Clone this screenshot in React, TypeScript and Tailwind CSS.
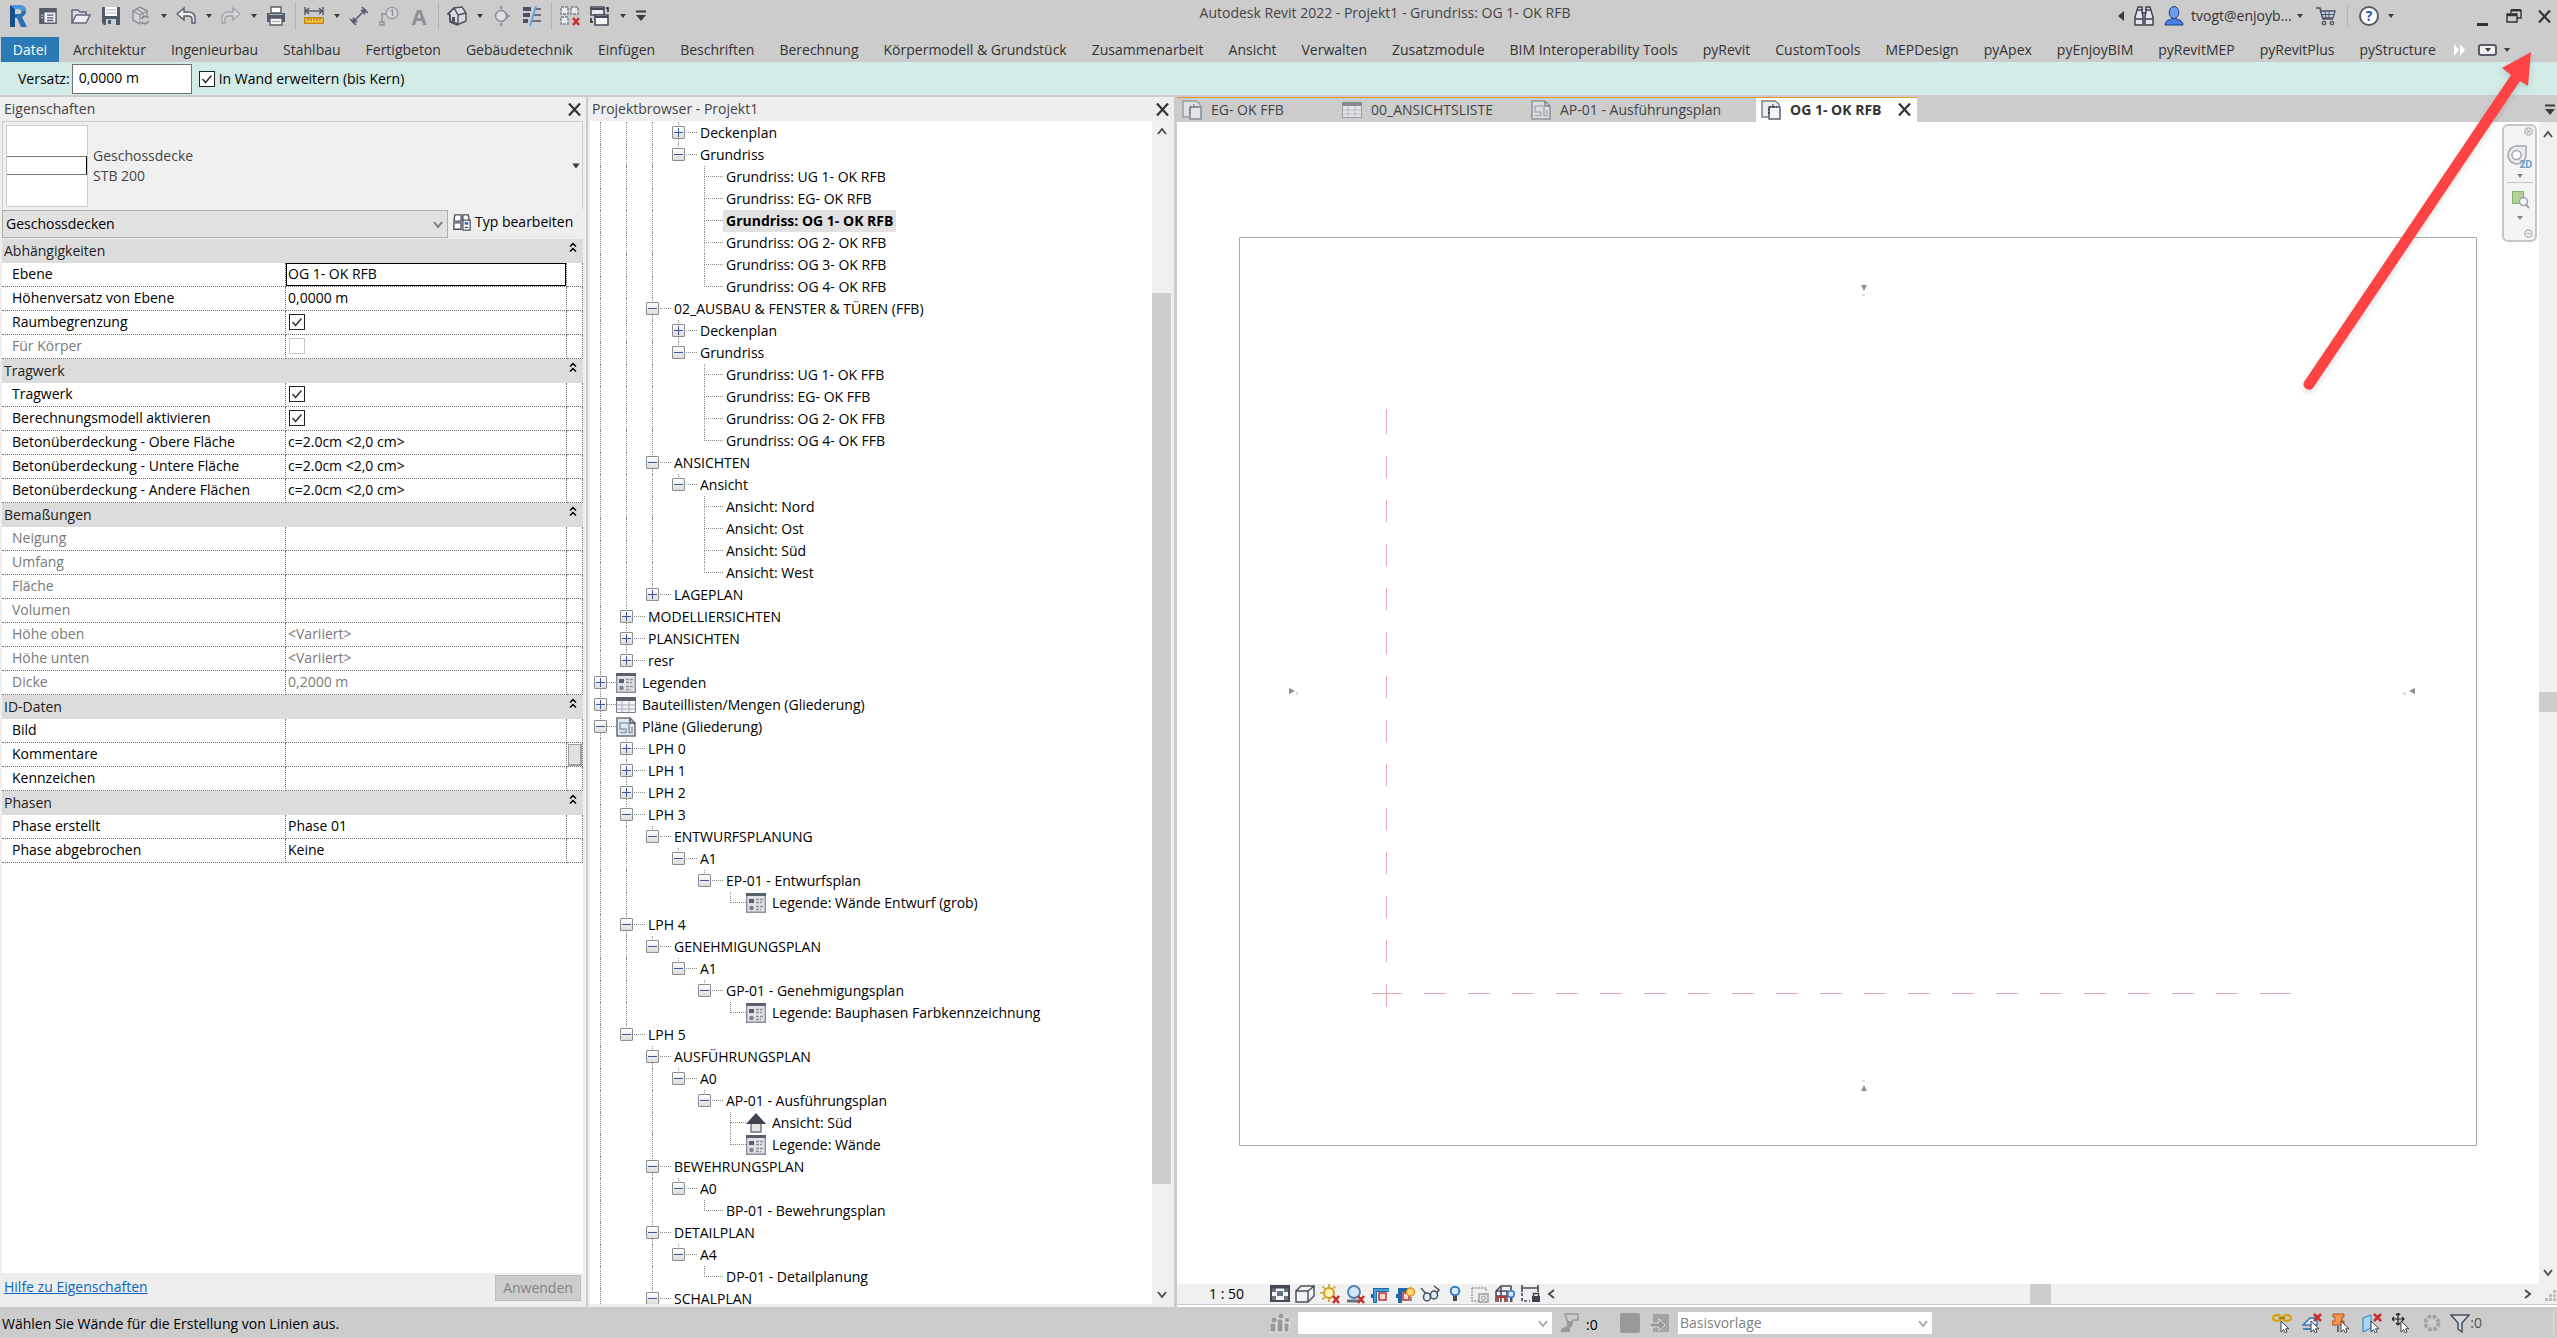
import type { ReactNode } from 'react'
import { clsx } from 'clsx'

type IconProps = { children: ReactNode; className?: string }

// All toolbar glyphs share a 20x20 grid
function Icon({ children, className = 'w-5 h-5' }: IconProps) {
  return (
    <svg viewBox="0 0 20 20" fill="none" className={clsx('shrink-0', className)} aria-hidden="true">
      {children}
    </svg>
  )
}

function Caret({ className = 'w-2 h-2' }: { className?: string }) {
  return (
    <svg viewBox="0 0 8 8" className={clsx('shrink-0', className)} aria-hidden="true">
      <path d="M1 2h6L4 6z" fill="#3c3c3c" />
    </svg>
  )
}

function Cross({ className = 'w-[13px] h-[13px]' }: { className?: string }) {
  return (
    <svg viewBox="0 0 13 13" className={clsx('shrink-0', className)} aria-hidden="true">
      <path d="M1 0.5l11 12M12 0.5L1 12.5" stroke="#333" strokeWidth="2.2" />
    </svg>
  )
}

function Chevron({ dir, className = 'w-3 h-3' }: { dir: 'up' | 'down' | 'left' | 'right'; className?: string }) {
  const d = {
    up: 'M2 8l4-5 4 5',
    down: 'M2 4l4 5 4-5',
    left: 'M8 2L3 6l5 4',
    right: 'M4 2l5 4-5 4'
  }[dir]
  return (
    <svg viewBox="0 0 12 12" className={clsx('shrink-0', className)} aria-hidden="true">
      <path d={d} fill="none" stroke="#505050" strokeWidth="2" />
    </svg>
  )
}

function Overflow() {
  return (
    <svg viewBox="0 0 12 12" className="w-3 h-3 shrink-0" aria-hidden="true">
      <path d="M1 1.5h10" stroke="#3c3c3c" strokeWidth="2" />
      <path d="M1 5h10l-5 6z" fill="#3c3c3c" />
    </svg>
  )
}

const cursor = <path d="M9 8v11l2.6-2.4 1.7 3.2 1.8-.9-1.6-3.1H17z" fill="#fff" stroke="#3a3f4a" />
const redX = <path d="M13 12l6 7M19 12l-6 7" stroke="#c9302c" strokeWidth="2.6" />

/* ---------- Document icons, also used in tree and view tabs ---------- */

const PlanIcon = () => (
  <Icon>
    <path d="M1 1h13l4 3v5H8v8H1z" fill="#e9ecf0" stroke="#7b818b" strokeWidth="1.5" />
    <path d="M8 7h11v12H8z" fill="#f3f5f8" stroke="#5d636e" strokeWidth="1.5" />
    <path d="M8 14V7h8" stroke="#333a47" strokeWidth="1.5" strokeDasharray="2 1.5" />
    <path d="M12 7V4" stroke="#333a47" />
  </Icon>
)

const ScheduleIcon = () => (
  <Icon>
    <path d="M.5 2.5h19v15H.5z" fill="#f2f4f6" stroke="#7b818b" />
    <path d="M0 2h20v4H0z" fill="#59606c" />
    <path d="M1 10h18M1 14h18M6 6v11M13 6v11" stroke="#a7adb6" />
  </Icon>
)

const SheetIcon = () => (
  <Icon>
    <path d="M1 1h13l5 5v13H1z" fill="#e4e7eb" stroke="#6b717c" strokeWidth="1.6" />
    <path d="M14 1v5h5" stroke="#4b515c" strokeWidth="1.4" />
    <path d="M4 15.5h6V12H4V6h9v9.5h3V10" stroke="#8f9daf" strokeWidth="1.6" />
  </Icon>
)

const LegendIcon = () => (
  <Icon>
    <path d="M.7.7h18.6v18.6H.7z" fill="#dfe2e7" stroke="#8a8f98" strokeWidth="1.4" />
    <path d="M0 0h20v3H0z" fill="#59606c" />
    <path d="M3 6h5v4H3z" fill="#59606c" />
    <circle cx="5.5" cy="15" r="2.3" fill="#7b818b" />
    <path d="M10 6.5h7M10 9.5h6M10 13.5h7M10 16.5h5" stroke="#8a8f98" strokeWidth="1.4" strokeDasharray="3 1" />
  </Icon>
)

const ElevationIcon = () => (
  <Icon>
    <path d="M5 9v10h10V9" fill="#e3e5e9" stroke="#6b717c" strokeWidth="1.4" />
    <path d="M10 0l10 11H0z" fill="#3d434f" />
  </Icon>
)

/* ---------- Title bar ---------- */

function QuickButton({ label, children }: { label: string; children: ReactNode }) {
  return (
    <button type="button" aria-label={label} className="w-[30px] h-8 flex items-center justify-center shrink-0">
      {children}
    </button>
  )
}

function QuickCaret({ label }: { label: string }) {
  return (
    <button type="button" aria-label={label} className="w-[15px] h-8 flex items-center justify-center shrink-0">
      <Caret />
    </button>
  )
}

const Divider = () => (
  <span className="w-2 h-7 flex justify-center shrink-0">
    <span className="w-px bg-[#b4b4b4]" />
  </span>
)

function QuickAccess() {
  return (
    <div className="flex items-center pl-[3px]">
      <QuickButton label="Revit">
        <svg viewBox="0 0 20 24" className="w-5 h-6" aria-hidden="true">
          <path d="M2 1h9c5 0 7 2.5 7 6 0 3-1.5 5-4 6l5 10h-6l-4-9H7v9H2z" fill="#2a6fb3" />
          <path d="M2 1l5 4v18H2z" fill="#174f8c" />
          <path d="M7 5h4c2 0 2.5 1 2.5 2.5S13 10 11 10H7z" fill="#ccc" />
          <path d="M2 1h9c5 0 7 2.5 7 6l-5 0c0-1.5-1-2-2-2H7z" fill="#4b97d8" />
        </svg>
      </QuickButton>
      <QuickButton label="Start">
        <Icon className="w-[18px] h-5">
          <path d="M1 2h18v16H1z" fill="#eef0f2" stroke="#565c67" strokeWidth="1.6" />
          <path d="M1 2h18v4H1zM1 6h5v12H1z" fill="#565c67" />
          <path d="M9 9h7M9 12h7M9 15h7" stroke="#565c67" strokeWidth="1.4" />
          <path d="M2.5 9h2M2.5 12h2" stroke="#fff" />
        </Icon>
      </QuickButton>
      <span className="w-[3px] shrink-0" />
      <QuickButton label="Öffnen">
        <Icon>
          <path d="M1 17V4h6l2 2h6v3" fill="#d9dce0" stroke="#636975" strokeWidth="1.5" />
          <path d="M1 17l4-8h14l-4 8z" fill="#eceef1" stroke="#636975" strokeWidth="1.5" />
        </Icon>
      </QuickButton>
      <QuickButton label="Speichern">
        <Icon>
          <path d="M1 1h18v18H3l-2-2z" fill="#525a69" />
          <path d="M4 1h12v9H4z" fill="#fff" />
          <path d="M5 4h10M5 7h10" stroke="#aab0ba" />
          <path d="M5 13h10v6H5z" fill="#c9ced6" />
          <path d="M7 14h3v4H7z" fill="#525a69" />
        </Icon>
      </QuickButton>
      <QuickButton label="Synchronisieren">
        <Icon>
          <path d="M9 1l7 4v9l-7 4-7-4V5z" fill="#d3d5d8" stroke="#8c9097" strokeWidth="1.5" />
          <path d="M2 5l7 4 7-4M9 9v9M5 3l7 4v4" stroke="#8c9097" strokeWidth="1.3" />
          <circle cx="14" cy="14" r="5" fill="#ccc" />
          <path d="M10.5 13a4 4 0 017-1M17.500 15a4 4 0 01-7 1" stroke="#85898f" strokeWidth="1.8" />
        </Icon>
      </QuickButton>
      <QuickCaret label="Synchronisieren Optionen" />
      <QuickButton label="Rückgängig">
        <Icon>
          <path d="M1 8l7-6v4h4c5 0 7 3 7 6v5h-3v-4c0-2-1-3-4-3H8v4z" fill="#eceef1" stroke="#565c67" strokeWidth="1.4" />
        </Icon>
      </QuickButton>
      <QuickCaret label="Rückgängig Liste" />
      <QuickButton label="Wiederholen">
        <Icon>
          <path d="M19 8l-7-6v4H8c-5 0-7 3-7 6v5h3v-4c0-2 1-3 4-3h4v4z" fill="#d5d6d8" stroke="#a2a5aa" strokeWidth="1.4" />
        </Icon>
      </QuickButton>
      <QuickCaret label="Wiederholen Liste" />
      <QuickButton label="Drucken">
        <Icon>
          <path d="M5 1h10v6H5z" fill="#fff" stroke="#565c67" strokeWidth="1.4" />
          <path d="M1 7h18v9H1z" fill="#565c67" />
          <path d="M3 8.5h14" stroke="#aab0ba" />
          <path d="M4 12h12v7H4z" fill="#f4f5f6" stroke="#565c67" strokeWidth="1.4" />
          <path d="M6 15.5h8" stroke="#aab0ba" />
        </Icon>
      </QuickButton>
      <Divider />
      <QuickButton label="Messen">
        <Icon>
          <path d="M2 5h16M5 2L2 5l3 3M15 2l3 3-3 3M1 1v8M19 1v8" stroke="#565c67" strokeWidth="1.5" />
          <path d="M.7 11.7h18.6v5.6H.7z" fill="#fbc94a" stroke="#c98a12" strokeWidth="1.4" />
          <path d="M4 12v3M7 12v3M10 12v3M13 12v3M16 12v3" stroke="#9c6a08" />
        </Icon>
      </QuickButton>
      <QuickCaret label="Messen Optionen" />
      <QuickButton label="Ausgerichtete Bemaßung">
        <Icon>
          <path d="M4 16L16 4M1 13l6 6M13 1l6 6" stroke="#565c67" strokeWidth="1.5" />
          <path d="M3 17l1-6 5 5zM17 3l-1 6-5-5z" fill="#565c67" />
        </Icon>
      </QuickButton>
      <QuickButton label="Nach Kategorie beschriften">
        <Icon>
          <circle cx="13" cy="7" r="5.8" fill="#d5d6d8" stroke="#9a9da3" strokeWidth="1.4" />
          <path d="M11.5 5.5l2-1.5v6M7 8H3v8M1 16h4v3H1z" stroke="#8c9097" strokeWidth="1.3" />
        </Icon>
      </QuickButton>
      <QuickButton label="Text">
        <span className="font-bold text-[22px] leading-6 text-[#8c8f94]">A</span>
      </QuickButton>
      <Divider />
      <QuickButton label="3D-Ansicht">
        <Icon>
          <path d="M1 8l6-6 8-1 4 6v8l-9 4-7-3V9z" fill="#d8dce2" stroke="#4b515c" strokeWidth="1.4" />
          <path d="M1 8l6-6 4 7v9l-8-3V9zM11 9l8-2" stroke="#4b515c" strokeWidth="1.4" />
          <path d="M5 11h3v5l-3-1z" fill="#4b515c" />
        </Icon>
      </QuickButton>
      <QuickCaret label="3D-Ansicht Optionen" />
      <QuickButton label="Schnitt">
        <Icon>
          <path d="M9 0v3M9 17v3" stroke="#8c9097" strokeWidth="2" />
          <path d="M10 3l8 7-8 7z" fill="#8c9097" />
          <circle cx="9" cy="10" r="5.5" fill="#dfe0e2" stroke="#8c9097" strokeWidth="1.5" />
        </Icon>
      </QuickButton>
      <QuickButton label="Feine Linien">
        <Icon>
          <path d="M1 3h8M1 9h7M1 15h5" stroke="#4b515c" strokeWidth="4" />
          <path d="M12 3h7M11 9h8M9 15h10" stroke="#4b515c" strokeWidth="1.5" />
          <path d="M14 0L8 20" stroke="#5aa5ea" strokeWidth="1.8" />
        </Icon>
      </QuickButton>
      <Divider />
      <QuickButton label="Inaktive Ansichten schließen">
        <Icon>
          <path d="M1 1h7v7H1zM11 1h7v7h-7zM1 11h7v7H1z" fill="#e8eaed" stroke="#7b818b" strokeWidth="1.4" strokeDasharray="3 1" />
          {redX}
        </Icon>
      </QuickButton>
      <QuickButton label="Fenster wechseln">
        <Icon>
          <path d="M1 1h13v8H1z" fill="#e8eaed" stroke="#444a55" strokeWidth="1.6" />
          <path d="M5 9h13v10H5z" fill="#f4f5f6" stroke="#444a55" strokeWidth="1.6" />
          <path d="M5 11h13M1 3h13" stroke="#444a55" strokeWidth="2" />
          <path d="M16 2h2v4M1 12v4h2" stroke="#222" strokeWidth="1.5" />
        </Icon>
      </QuickButton>
      <QuickCaret label="Fensterliste" />
      <button type="button" aria-label="Schnellzugriff anpassen" className="w-[22px] flex justify-center">
        <Overflow />
      </button>
    </div>
  )
}

function WindowControls() {
  return (
    <div className="flex items-center">
      <button type="button" aria-label="Suche einblenden" className="mr-[10px]">
        <svg viewBox="0 0 6 10" className="w-[6px] h-[10px]"><path d="M6 0v10L0 5z" fill="#3c3c3c" /></svg>
      </button>
      <button type="button" aria-label="Suchen" className="mr-[10px]">
        <Icon>
          <path d="M4 1h4v5l1 4v9H1v-8zM12 1h4l3 10v8h-8v-9l1-4z" fill="#e3e5e9" stroke="#3d434f" strokeWidth="1.5" />
          <path d="M8 7h4M1 13h8M11 13h8M4 4h4M12 4h4" stroke="#3d434f" strokeWidth="1.3" />
        </Icon>
      </button>
      <button type="button" className="w-[140px] flex items-center text-[#333]">
        <Icon className="w-5 h-5 mr-[7px]">
          <path d="M1 19c0-4 3-5 7-6v-2h4v2c4 1 7 2 7 6z" fill="#4d80e0" stroke="#1f3d7a" />
          <ellipse cx="10" cy="6.5" rx="4.8" ry="6" fill="#6c9bf0" stroke="#1f3d7a" />
        </Icon>
        tvogt@enjoyb...
        <Caret className="w-2 h-2 ml-auto" />
      </button>
      <button type="button" aria-label="App Store" className="ml-3">
        <Icon>
          <path d="M0 2h4l3 11h10" stroke="#4b5466" strokeWidth="1.6" />
          <path d="M4.500 5H19l-2 7H7z" fill="#c9d3e2" stroke="#4b5466" strokeWidth="1.3" />
          <path d="M9 5l1 7M13 5v7M5 8.500h13" stroke="#4b5466" />
          <circle cx="8" cy="17" r="1.7" stroke="#4b5466" strokeWidth="1.3" />
          <circle cx="16" cy="17" r="1.7" stroke="#4b5466" strokeWidth="1.3" />
        </Icon>
      </button>
      <span className="w-px h-6 bg-[#b4b4b4] mx-[11px]" />
      <button type="button" aria-label="Hilfe" className="flex items-center">
        <span className="w-5 h-5 rounded-full bg-white border-2 border-[#565c67] text-[#2451b8] font-bold text-[14px] leading-4 text-center">?</span>
        <Caret className="w-2 h-2 ml-2" />
      </button>
      <button type="button" aria-label="Minimieren" className="ml-[82px] w-[11px] h-[19px] flex items-end">
        <span className="w-full h-[3px] bg-[#333]" />
      </button>
      <button type="button" aria-label="Verkleinern" className="ml-[18px]">
        <svg viewBox="0 0 16 14" className="w-4 h-[14px]" fill="none" stroke="#333" aria-hidden="true">
          <path d="M5 4V1.5h10V9h-4" strokeWidth="1.4" />
          <path d="M5 1h10M1 6h10" strokeWidth="2.5" />
          <path d="M1 5h10v8H1z" strokeWidth="1.4" />
        </svg>
      </button>
      <button type="button" aria-label="Schließen" className="ml-4 mr-[6px]">
        <Cross />
      </button>
    </div>
  )
}

const ribbonTabs = [
  'Architektur', 'Ingenieurbau', 'Stahlbau', 'Fertigbeton', 'Gebäudetechnik', 'Einfügen', 'Beschriften',
  'Berechnung', 'Körpermodell & Grundstück', 'Zusammenarbeit', 'Ansicht', 'Verwalten', 'Zusatzmodule',
  'BIM Interoperability Tools', 'pyRevit', 'CustomTools', 'MEPDesign', 'pyApex', 'pyEnjoyBIM', 'pyRevitMEP',
  'pyRevitPlus', 'pyStructure'
]

function Ribbon() {
  return (
    <nav className="flex h-[30px] pt-[5px] pl-px text-[#333]">
      <button type="button" className="w-[58px] h-[25px] bg-[#2a7ab5] text-white shrink-0">Datei</button>
      <div className="flex-1 flex justify-between pl-[14px] pr-[18px] whitespace-nowrap">
        {ribbonTabs.map((tab) => (
          <button key={tab} type="button">{tab}</button>
        ))}
      </div>
      <div className="w-[103px] flex items-center shrink-0">
        <svg viewBox="0 0 12 12" className="w-3 h-3" aria-hidden="true">
          <path d="M0 0l5 6-5 6zM6 0l5 6-5 6z" fill="#fff" />
        </svg>
        <button type="button" aria-label="Ribbon minimieren" className="ml-3 w-[19px] h-3 rounded-[3px] border-2 border-[#565c67] bg-[#f0f0f0] flex items-center justify-center">
          <Caret />
        </button>
        <Caret className="w-2 h-2 ml-[6px]" />
      </div>
    </nav>
  )
}

/* ---------- Form controls ---------- */

function Checkbox({ id, checked, disabled }: { id: string; checked: boolean; disabled?: boolean }) {
  return (
    <span className="relative inline-block w-4 h-4 align-middle shrink-0">
      <input
        id={id}
        type="checkbox"
        defaultChecked={checked}
        disabled={disabled}
        className="peer block appearance-none w-4 h-4 bg-white border border-[#222] disabled:border-[#c8c8c8]"
      />
      <svg viewBox="0 0 16 16" className="absolute inset-0 hidden peer-checked:block pointer-events-none" aria-hidden="true">
        <path d="M3.5 8l3 3.5 6-7" fill="none" stroke="#333" strokeWidth="1.5" />
      </svg>
    </span>
  )
}

function OptionsBar() {
  return (
    <div className="h-[33px] bg-[#d2ebe7] flex items-center pl-[18px] text-black">
      <label htmlFor="versatz">Versatz:</label>
      <input id="versatz" defaultValue="0,0000 m" className="ml-[2px] w-[120px] h-[30px] bg-white border border-[#707070] px-[6px] pb-[3px]" />
      <span className="w-[7px]" />
      <Checkbox id="erweitern" checked />
      <label htmlFor="erweitern" className="ml-1">In Wand erweitern (bis Kern)</label>
    </div>
  )
}

/* ---------- Properties palette ---------- */

type Prop = { name: string; value?: string | boolean; disabled?: boolean; active?: boolean; button?: boolean }

const groups: { title: string; rows: Prop[] }[] = [
  {
    title: 'Abhängigkeiten',
    rows: [
      { name: 'Ebene', value: 'OG 1- OK RFB', active: true },
      { name: 'Höhenversatz von Ebene', value: '0,0000 m' },
      { name: 'Raumbegrenzung', value: true },
      { name: 'Für Körper', value: false, disabled: true }
    ]
  },
  {
    title: 'Tragwerk',
    rows: [
      { name: 'Tragwerk', value: true },
      { name: 'Berechnungsmodell aktivieren', value: true },
      { name: 'Betonüberdeckung - Obere Fläche', value: 'c=2.0cm <2,0 cm>' },
      { name: 'Betonüberdeckung - Untere Fläche', value: 'c=2.0cm <2,0 cm>' },
      { name: 'Betonüberdeckung - Andere Flächen', value: 'c=2.0cm <2,0 cm>' }
    ]
  },
  {
    title: 'Bemaßungen',
    rows: [
      { name: 'Neigung', disabled: true },
      { name: 'Umfang', disabled: true },
      { name: 'Fläche', disabled: true },
      { name: 'Volumen', disabled: true },
      { name: 'Höhe oben', value: '<Variiert>', disabled: true },
      { name: 'Höhe unten', value: '<Variiert>', disabled: true },
      { name: 'Dicke', value: '0,2000 m', disabled: true }
    ]
  },
  {
    title: 'ID-Daten',
    rows: [{ name: 'Bild' }, { name: 'Kommentare', button: true }, { name: 'Kennzeichen' }]
  },
  {
    title: 'Phasen',
    rows: [
      { name: 'Phase erstellt', value: 'Phase 01' },
      { name: 'Phase abgebrochen', value: 'Keine' }
    ]
  }
]

function PropertyRow({ id, row }: { id: string; row: Prop }) {
  const color = row.disabled ? 'text-[#7a7a7a]' : 'text-black'
  const line = 'h-6 p-0 border-b border-r border-dotted border-[#6e6e6e]'
  return (
    <tr className={color}>
      <th scope="row" className={clsx(line, 'pl-[10px] text-left font-normal')}>
        <label htmlFor={id} className="block leading-[21px] pb-[2px]">{row.name}</label>
      </th>
      <td className={line}>
        {typeof row.value === 'boolean' ? (
          <span className="flex items-center h-[23px] pl-[3px] pb-px">
            <Checkbox id={id} checked={row.value} disabled={row.disabled} />
          </span>
        ) : (
          <input
            id={id}
            defaultValue={row.value ?? ''}
            disabled={row.disabled}
            className={clsx('block w-full h-[23px] border bg-transparent px-px pb-[2px]', row.active ? 'border-black' : 'border-transparent')}
          />
        )}
      </td>
      <td className={line}>
        {row.button && (
          <button type="button" aria-label={`${row.name} bearbeiten`} className="block w-[14px] h-[22px] ml-px bg-[#e1e1e1] border border-r-2 border-b-2 border-[#a0a0a0]" />
        )}
      </td>
    </tr>
  )
}

function PaletteHeader({ title }: { title: string }) {
  return (
    <div className="h-6 bg-[#eee] flex items-center justify-between pl-1 pr-[5px] text-[#444] shrink-0">
      <h2>{title}</h2>
      <button type="button" aria-label={`${title} schließen`}><Cross /></button>
    </div>
  )
}

function Properties() {
  return (
    <section className="w-[588px] shrink-0 bg-[#eee] flex flex-col border-r-2 border-[#ccc]">
      <PaletteHeader title="Eigenschaften" />
      <div className="flex-1 min-h-0 flex flex-col pl-[2px] pr-[3px]">
        <button type="button" className="h-[88px] shrink-0 border border-b-0 border-[#ccc] bg-[#f0f0f0] flex items-center pl-[3px] pr-px text-left text-[#444]">
          <span className="w-[82px] h-[82px] bg-white border border-[#ccc] flex flex-col justify-center shrink-0">
            <span className="h-[19px] border-y border-r border-y-[#777] border-r-black" />
          </span>
          <span className="ml-[5px] flex-1 leading-5">
            Geschossdecke<br />STB 200
          </span>
          <Caret className="w-[10px] h-[10px]" />
        </button>
        <div className="h-[30px] shrink-0 flex items-center text-black">
          <span className="relative w-[446px]">
            <select aria-label="Kategorie" className="appearance-none block w-full h-7 bg-[#e1e1e1] border border-[#adadad] pl-[3px]">
              <option>Geschossdecken</option>
            </select>
            <Chevron dir="down" className="absolute right-1 top-2 w-3 h-3 opacity-70 pointer-events-none" />
          </span>
          <button type="button" className="ml-[5px] flex items-center pb-1">
            <Icon className="w-[18px] h-[18px] mr-1">
              <path d="M2 2h7v7H1zM11 2h6l1 7h-7zM1 11h8v7H1z" fill="#fff" stroke="#4b515c" strokeWidth="1.5" />
              <path d="M11 8h8v11h-8z" fill="#fff" stroke="#4b515c" strokeWidth="1.4" />
              <path d="M13 10h4v3h-4z" fill="#3c6fb8" />
              <path d="M13 16h4" stroke="#4b515c" strokeWidth="1.5" />
            </Icon>
            Typ bearbeiten
          </button>
        </div>
        <div className="flex-1 min-h-0 bg-white overflow-hidden">
          <table className="w-full table-fixed border-separate border-spacing-0">
            <colgroup>
              <col className="w-[284px]" />
              <col />
              <col className="w-4" />
            </colgroup>
            {groups.map((group) => (
              <tbody key={group.title}>
                <tr>
                  <th colSpan={3} scope="colgroup" className="h-6 p-0 bg-[#dcdcdc] font-normal text-left text-[#222]">
                    <span className="flex items-center justify-between pl-[2px] pr-[5px]">
                      {group.title}
                      <svg viewBox="0 0 10 12" className="w-[10px] h-3 mb-2" aria-hidden="true">
                        <path d="M2 5.5l3-3 3 3M2 10.5l3-3 3 3" fill="none" stroke="#000" strokeWidth="1.5" />
                      </svg>
                    </span>
                  </th>
                </tr>
                {group.rows.map((row) => (
                  <PropertyRow key={row.name} id={`${group.title}-${row.name}`.replaceAll(' ', '-')} row={row} />
                ))}
              </tbody>
            ))}
          </table>
        </div>
        <div className="h-[34px] shrink-0 flex items-center justify-between pl-[2px] pr-[2px]">
          <a href="#hilfe" className="text-[#0a66c2] underline pb-[6px]">Hilfe zu Eigenschaften</a>
          <button type="button" disabled className="w-[86px] h-[26px] mb-1 bg-[#ccc] border border-[#bcbcbc] text-[#838383]">Anwenden</button>
        </div>
      </div>
    </section>
  )
}

/* ---------- Project browser ---------- */

type Node = { depth: number; label: string; box?: '+' | '-'; icon?: ReactNode; selected?: boolean }

const nodes: Node[] = [
  { depth: 3, label: 'Deckenplan', box: '+' },
  { depth: 3, label: 'Grundriss', box: '-' },
  { depth: 4, label: 'Grundriss: UG 1- OK RFB' },
  { depth: 4, label: 'Grundriss: EG- OK RFB' },
  { depth: 4, label: 'Grundriss: OG 1- OK RFB', selected: true },
  { depth: 4, label: 'Grundriss: OG 2- OK RFB' },
  { depth: 4, label: 'Grundriss: OG 3- OK RFB' },
  { depth: 4, label: 'Grundriss: OG 4- OK RFB' },
  { depth: 2, label: '02_AUSBAU & FENSTER & TÜREN (FFB)', box: '-' },
  { depth: 3, label: 'Deckenplan', box: '+' },
  { depth: 3, label: 'Grundriss', box: '-' },
  { depth: 4, label: 'Grundriss: UG 1- OK FFB' },
  { depth: 4, label: 'Grundriss: EG- OK FFB' },
  { depth: 4, label: 'Grundriss: OG 2- OK FFB' },
  { depth: 4, label: 'Grundriss: OG 4- OK FFB' },
  { depth: 2, label: 'ANSICHTEN', box: '-' },
  { depth: 3, label: 'Ansicht', box: '-' },
  { depth: 4, label: 'Ansicht: Nord' },
  { depth: 4, label: 'Ansicht: Ost' },
  { depth: 4, label: 'Ansicht: Süd' },
  { depth: 4, label: 'Ansicht: West' },
  { depth: 2, label: 'LAGEPLAN', box: '+' },
  { depth: 1, label: 'MODELLIERSICHTEN', box: '+' },
  { depth: 1, label: 'PLANSICHTEN', box: '+' },
  { depth: 1, label: 'resr', box: '+' },
  { depth: 0, label: 'Legenden', box: '+', icon: <LegendIcon /> },
  { depth: 0, label: 'Bauteillisten/Mengen (Gliederung)', box: '+', icon: <ScheduleIcon /> },
  { depth: 0, label: 'Pläne (Gliederung)', box: '-', icon: <SheetIcon /> },
  { depth: 1, label: 'LPH 0', box: '+' },
  { depth: 1, label: 'LPH 1', box: '+' },
  { depth: 1, label: 'LPH 2', box: '+' },
  { depth: 1, label: 'LPH 3', box: '-' },
  { depth: 2, label: 'ENTWURFSPLANUNG', box: '-' },
  { depth: 3, label: 'A1', box: '-' },
  { depth: 4, label: 'EP-01 - Entwurfsplan', box: '-' },
  { depth: 5, label: 'Legende: Wände Entwurf (grob)', icon: <LegendIcon /> },
  { depth: 1, label: 'LPH 4', box: '-' },
  { depth: 2, label: 'GENEHMIGUNGSPLAN', box: '-' },
  { depth: 3, label: 'A1', box: '-' },
  { depth: 4, label: 'GP-01 - Genehmigungsplan', box: '-' },
  { depth: 5, label: 'Legende: Bauphasen Farbkennzeichnung', icon: <LegendIcon /> },
  { depth: 1, label: 'LPH 5', box: '-' },
  { depth: 2, label: 'AUSFÜHRUNGSPLAN', box: '-' },
  { depth: 3, label: 'A0', box: '-' },
  { depth: 4, label: 'AP-01 - Ausführungsplan', box: '-' },
  { depth: 5, label: 'Ansicht: Süd', icon: <ElevationIcon /> },
  { depth: 5, label: 'Legende: Wände', icon: <LegendIcon /> },
  { depth: 2, label: 'BEWEHRUNGSPLAN', box: '-' },
  { depth: 3, label: 'A0', box: '-' },
  { depth: 4, label: 'BP-01 - Bewehrungsplan' },
  { depth: 2, label: 'DETAILPLAN', box: '-' },
  { depth: 3, label: 'A4', box: '-' },
  { depth: 4, label: 'DP-01 - Detailplanung' },
  { depth: 2, label: 'SCHALPLAN', box: '-' }
]

// A guide line runs on below row `index` when a later sibling exists on that level.
// The root level always goes on past the visible part of the tree.
function continues(index: number, level: number) {
  if (level === 0) return true
  for (const node of nodes.slice(index + 1)) {
    if (node.depth < level) return false
    if (node.depth === level) return true
  }
  return false
}

function TreeRow({ node, index }: { node: Node; index: number }) {
  const levels = Array.from({ length: node.depth }, (_, level) => level)
  return (
    <li className="flex h-[22px] items-center" role="treeitem" aria-level={node.depth + 1}>
      {levels.map((level) => (
        <span key={level} className="w-[26px] h-full pl-[10px] shrink-0">
          {continues(index, level) && <span className="block h-full border-l border-dotted border-[#8c8c8c]" />}
        </span>
      ))}
      <span className={clsx('h-full flex flex-col shrink-0 relative pl-[10px]', node.icon ? 'w-[26px]' : 'w-[29px]')}>
        <span className="h-[11px] border-l border-b border-dotted border-[#8c8c8c] shrink-0" />
        <span className={clsx('h-[11px]', continues(index, node.depth) && 'border-l border-dotted border-[#8c8c8c]')} />
        {node.box && (
          <button
            type="button"
            aria-label={`${node.label} ${node.box === '+' ? 'erweitern' : 'reduzieren'}`}
            className="absolute left-1 top-1 w-[13px] h-[13px] border border-[#8c8c8c] rounded-[1px] bg-linear-to-b from-white to-[#dcdcdc]"
          >
            <svg viewBox="0 0 11 11" className="block w-[11px] h-[11px]" aria-hidden="true">
              <path d={node.box === '+' ? 'M1 5.5h9M5.5 1v9' : 'M1 5.5h9'} stroke="#3a56a0" />
            </svg>
          </button>
        )}
      </span>
      {node.icon}
      <span
        className={clsx(
          'h-[22px] leading-[21px] px-[3px] whitespace-nowrap text-black',
          node.icon && 'ml-[3px]',
          node.selected && 'bg-[#e1e1e1] font-bold'
        )}
      >
        {node.label}
      </span>
    </li>
  )
}

function ProjectBrowser() {
  return (
    <section className="w-[589px] shrink-0 bg-[#eee] flex flex-col border-r-3 border-[#ccc]">
      <PaletteHeader title="Projektbrowser - Projekt1" />
      <div className="flex-1 min-h-0 flex ml-[2px] mr-[3px] mb-[3px] bg-white">
        <ul role="tree" className="flex-1 overflow-hidden pt-px">
          {nodes.map((node, i) => (
            <TreeRow key={i} node={node} index={i} />
          ))}
        </ul>
        <div className="w-[19px] bg-[#f0f0f0] flex flex-col items-center shrink-0">
          <div className="flex-[172] flex items-start"><Chevron dir="up" className="w-3 h-3 mt-[5px]" /></div>
          <div className="flex-[891] w-full bg-[#cdcdcd]" />
          <div className="flex-[120] flex items-end"><Chevron dir="down" className="w-3 h-3 mb-1" /></div>
        </div>
      </div>
    </section>
  )
}

/* ---------- Drawing area ---------- */

const viewTabs = [
  { label: 'EG- OK FFB', icon: <PlanIcon />, width: 'w-40' },
  { label: '00_ANSICHTSLISTE', icon: <ScheduleIcon />, width: 'w-[189px]' },
  { label: 'AP-01 - Ausführungsplan', icon: <SheetIcon />, width: 'w-[230px]' }
]

function ViewTabs() {
  return (
    <div className="h-[25px] bg-[#ccc] flex justify-between text-[#444] shrink-0">
      <div className="flex border-t border-[#e09a2b]" role="tablist">
        {viewTabs.map((tab) => (
          <button key={tab.label} type="button" role="tab" className={clsx('flex items-center gap-[9px] pl-[5px] pb-px whitespace-nowrap', tab.width)}>
            <span className="opacity-60">{tab.icon}</span>
            {tab.label}
          </button>
        ))}
        <div role="tab" aria-selected="true" className="w-[161px] bg-white flex items-center gap-[9px] pl-[5px] pr-[6px] pb-px font-bold text-[#333] whitespace-nowrap">
          <PlanIcon />
          OG 1- OK RFB
          <button type="button" aria-label="Ansicht schließen" className="ml-auto"><Cross /></button>
        </div>
      </div>
      <button type="button" aria-label="Ansichtsliste" className="pr-px"><Overflow /></button>
    </div>
  )
}

function Drawing() {
  return (
    <svg viewBox="0 0 1362 1162" className="block w-full h-full" fill="none" role="img" aria-label="Grundriss OG 1">
      <path d="M62.5 115.5h1237v908h-1237z" stroke="#a8a8a8" />
      <g stroke="#e3a9ad">
        <path d="M209.5 290v572" strokeDasharray="22 22" />
        <path d="M247 871.5h860" strokeDasharray="22 22" />
        <path d="M209.5 287v4M1104 871.5h10" />
        <path d="M209.5 862v23M195 871.5h30" />
      </g>
      <g fill="#8f8f8f">
        <path d="M684 163h6l-3 6zM684 969h6l-3-6zM112 566v6l6-3zM1238 566v6l-6-3z" />
      </g>
      <g fill="#ddd">
        <path d="M685 172h3v2h-3zM685 958h3v2h-3zM119 570h2v3h-2zM1226 570h3v3h-3z" />
      </g>
    </svg>
  )
}

function NavigationBar() {
  return (
    <div className="absolute top-[2px] right-[2px] w-[35px] h-[118px] rounded-md border-2 border-[#c6c6c6] bg-[#f4f4f4] flex flex-col items-center">
      <button type="button" aria-label="Navigationsleiste schließen" className="self-end mr-[2px] mt-px">
        <svg viewBox="0 0 10 10" className="w-[9px] h-[9px]" fill="none" stroke="#b4b4b4" aria-hidden="true">
          <circle cx="5" cy="5" r="4" strokeWidth="1.5" />
          <path d="M3 3l4 4M7 3L3 7" strokeWidth="1.3" />
        </svg>
      </button>
      <button type="button" aria-label="2D-Steuerrad" className="relative mt-[9px] mr-1 w-6 h-6">
        <svg viewBox="0 0 24 24" className="w-6 h-6" fill="none" stroke="#a3a8ae" aria-hidden="true">
          <path d="M11 1h9v9a9 9 0 11-9-9z" fill="#e9ebed" strokeWidth="1.5" />
          <circle cx="10.5" cy="10" r="4.5" fill="#fff" strokeWidth="1.5" />
        </svg>
        <span className="absolute right-[-3px] bottom-0 text-[10px] leading-[10px] font-bold text-[#6f9cc9]">2D</span>
      </button>
      <Caret className="w-2 h-2 mt-[3px] opacity-60" />
      <span className="w-[26px] h-px shrink-0 bg-[#c6c6c6] mt-[2px]" />
      <button type="button" aria-label="Zoom Region" className="mt-[6px]">
        <Icon>
          <path d="M2.5 2.5h11v12h-11z" fill="#b2d19c" stroke="#84b06a" />
          <circle cx="13.5" cy="12.5" r="4" fill="#f4f8fb" stroke="#9aa0a8" strokeWidth="1.5" />
          <path d="M16 15.5l3 3.5" stroke="#9aa0a8" strokeWidth="2" />
        </Icon>
      </button>
      <Caret className="w-2 h-2 mt-[5px] opacity-60" />
      <button type="button" aria-label="Optionen" className="self-end mr-[2px] mt-[7px]">
        <svg viewBox="0 0 10 10" className="w-[9px] h-[9px]" fill="none" stroke="#b4b4b4" strokeWidth="1.5" aria-hidden="true">
          <circle cx="5" cy="5" r="4" />
          <path d="M3 5h4" />
        </svg>
      </button>
    </div>
  )
}

const viewControls: { label: string; icon: ReactNode }[] = [
  {
    label: 'Detaillierungsgrad',
    icon: (
      <>
        <path d="M1 2h18v15H1z" fill="#f3f4f6" stroke="#444b57" strokeWidth="2" />
        <path d="M2 4h4v4H2zM14 4h4v4h-4zM7 7h6v5H7zM2 12h4v4H2zM14 12h4v4h-4z" fill="#6a7280" />
        <path d="M1 3h18" stroke="#444b57" strokeWidth="3" />
      </>
    )
  },
  {
    label: 'Visueller Stil',
    icon: <path d="M1 7h12v11H1zM1 7l5-5h13l-6 5M19 2v10l-6 6" fill="#f0f2f4" stroke="#4b515c" strokeWidth="1.5" />
  },
  {
    label: 'Sonnenbahn',
    icon: (
      <>
        <circle cx="9" cy="9" r="5" fill="#fff3b8" stroke="#d49a1d" strokeWidth="2" />
        <path d="M9 0v3M0 9h3M2.5 2.5l2 2M15.5 2.5l-2 2M2.5 15.5l2-2M9 15v3" stroke="#d49a1d" strokeWidth="1.6" />
        {redX}
      </>
    )
  },
  {
    label: 'Schatten',
    icon: (
      <>
        <circle cx="9" cy="8" r="6" fill="#cfe5f8" stroke="#4c7ea8" strokeWidth="1.8" />
        <path d="M2 17h12" stroke="#6a7280" strokeWidth="3" />
        {redX}
      </>
    )
  },
  {
    label: 'Zuschneiden',
    icon: (
      <>
        <path d="M5 19V6h14M1 12h4" stroke="#1f6aa6" strokeWidth="4" />
        <path d="M5 18V6h14" stroke="#5ab0e6" strokeWidth="1.5" />
        <path d="M9 9h7v7H9z" fill="#f7d7d7" stroke="#b33" strokeWidth="1.5" />
      </>
    )
  },
  {
    label: 'Zuschneidebereich',
    icon: (
      <>
        <path d="M5 19V6h9M1 12h4" stroke="#1f6aa6" strokeWidth="4" />
        <path d="M8 9h6v7H8z" fill="#f7d7d7" stroke="#b33" strokeWidth="1.5" />
        <circle cx="15.5" cy="8" r="4" fill="#ffd873" stroke="#d98c1a" strokeWidth="1.3" />
        <path d="M14 13h3v4h-3z" fill="#8a8f98" />
      </>
    )
  },
  {
    label: 'Temporär ausblenden',
    icon: (
      <>
        <path d="M1 4l6 7M14 2l5 4-5 6" stroke="#4b515c" strokeWidth="1.5" />
        <ellipse cx="7" cy="13" rx="3.5" ry="4" fill="#dcebf5" stroke="#4b515c" strokeWidth="1.5" />
        <ellipse cx="14" cy="11" rx="3.5" ry="4" fill="#dcebf5" stroke="#4b515c" strokeWidth="1.5" />
      </>
    )
  },
  {
    label: 'Verdeckte Elemente',
    icon: (
      <>
        <circle cx="10" cy="7" r="4.300" fill="#d7ebff" stroke="#3a7bc8" strokeWidth="2" />
        <path d="M8 12h4v5H8z" fill="#46505f" />
      </>
    )
  },
  {
    label: 'Ansichtseigenschaften',
    icon: (
      <>
        <path d="M2 4h14v4M2 4v13h7" stroke="#9a9da3" strokeWidth="1.5" strokeDasharray="2 1" />
        <path d="M9 10h9v8H9z" fill="#e8e8e8" stroke="#9a9da3" strokeWidth="1.5" />
        <circle cx="13.5" cy="14" r="2" stroke="#9a9da3" />
      </>
    )
  },
  {
    label: 'Berechnungsmodell',
    icon: (
      <>
        <path d="M1 7l5-5h10v9M1 7h11v11M1 7v11M6 2v16M1 12h11" stroke="#4b515c" strokeWidth="1.6" />
        <path d="M3 18v-5h7v5" stroke="#b33" strokeWidth="1.8" />
        <circle cx="16" cy="10" r="3.3" fill="#d7ebff" stroke="#3a7bc8" strokeWidth="1.6" />
        <path d="M15 14h2.5v4H15z" fill="#46505f" />
      </>
    )
  },
  {
    label: 'Abhängigkeiten einblenden',
    icon: (
      <>
        <path d="M1 4h18M2 1v7M18 1v7" stroke="#4b515c" strokeWidth="1.7" />
        <path d="M2 9v8h8" stroke="#4b515c" strokeWidth="1.7" strokeDasharray="3 2" />
        <path d="M12 12h8v6h-8z" fill="#3d434f" />
        <path d="M13.5 12V9.5h5V12" stroke="#3d434f" strokeWidth="1.5" />
      </>
    )
  }
]

function ViewControlBar() {
  return (
    <div className="h-5 bg-[#f0f0f0] flex items-center pl-8 pb-px shrink-0">
      <button type="button" className="w-[61px] text-left text-black">1 : 50</button>
      <div className="flex gap-[5px]">
        {viewControls.map((control) => (
          <button key={control.label} type="button" aria-label={control.label}>
            <Icon>{control.icon}</Icon>
          </button>
        ))}
      </div>
      <div className="ml-[6px] flex-1 flex items-center">
        <Chevron dir="left" />
        <div className="flex-[471]" />
        <div className="w-[21px] h-5 bg-[#cdcdcd]" />
        <div className="flex-[470]" />
        <Chevron dir="right" />
      </div>
      <svg viewBox="0 0 12 12" className="w-3 h-3 ml-3 mt-1" aria-hidden="true">
        <path d="M8 0h3v3H8zM4 4h3v3H4zM8 4h3v3H8zM0 8h3v3H0zM4 8h3v3H4zM8 8h3v3H8z" fill="#bdbdbd" />
      </svg>
    </div>
  )
}

function ViewArea() {
  return (
    <main className="flex-1 min-w-0 flex flex-col">
      <ViewTabs />
      <div className="flex-1 min-h-0 flex bg-white">
        <div className="flex-1 min-w-0 relative">
          <Drawing />
          <NavigationBar />
        </div>
        <div className="w-[18px] bg-[#f0f0f0] flex flex-col items-center shrink-0">
          <div className="flex-[570] flex items-start"><Chevron dir="up" className="w-3 h-3 mt-[7px]" /></div>
          <div className="h-5 w-full bg-[#cdcdcd]" />
          <div className="flex-[572] flex items-end"><Chevron dir="down" className="w-3 h-3 mb-[6px]" /></div>
        </div>
      </div>
      <ViewControlBar />
      <div className="h-[3px] bg-white border-t border-[#c8c8c8] shrink-0" />
    </main>
  )
}

/* ---------- Status bar ---------- */

const selectionTools: { label: string; icon: ReactNode }[] = [
  {
    label: 'Verknüpfungen auswählen',
    icon: (
      <>
        <ellipse cx="5" cy="5" rx="4" ry="3" stroke="#d9a514" strokeWidth="2.5" />
        <ellipse cx="15" cy="5" rx="4" ry="3" stroke="#d9a514" strokeWidth="2.5" />
        <path d="M7 5h6" stroke="#a87c08" strokeWidth="2" />
        {cursor}
      </>
    )
  },
  {
    label: 'Unterlagen auswählen',
    icon: (
      <>
        <path d="M1 12L8 5h7v7z" fill="#e4f1fb" stroke="#2f78bd" strokeWidth="1.5" />
        <path d="M1 16h13" stroke="#2f78bd" strokeWidth="1.7" />
        <path d="M12 1l7 7M19 1l-7 7" stroke="#c9302c" strokeWidth="2.6" />
        {cursor}
      </>
    )
  },
  {
    label: 'Fixierte Elemente auswählen',
    icon: (
      <>
        <path d="M1 1h11v3h-2v4h2v4H0V8h3V4H1z" fill="#f6964c" stroke="#b4531a" />
        <path d="M6 13v6" stroke="#444" strokeWidth="1.5" />
        {cursor}
      </>
    )
  },
  {
    label: 'Nach Fläche auswählen',
    icon: (
      <>
        <path d="M1 5l8-3v13l-8 4z" fill="#a9d6f2" stroke="#2f78bd" />
        <path d="M12 1l7 7M19 1l-7 7" stroke="#c9302c" strokeWidth="2.6" />
        {cursor}
      </>
    )
  },
  {
    label: 'Elemente ziehen',
    icon: (
      <>
        <path d="M6 0v12M0 6h12M4 2l2-2 2 2M4 10l2 2 2-2M2 4L0 6l2 2M10 4l2 2-2 2" stroke="#222" strokeWidth="1.2" />
        {cursor}
      </>
    )
  },
  {
    label: 'Hintergrundprozesse',
    icon: <circle cx="10" cy="10" r="6.5" stroke="#a3a3a3" strokeWidth="4" strokeDasharray="3.5 1.6" />
  }
]

function StatusSelect({ label, value }: { label: string; value: string }) {
  return (
    <span className="relative w-[254px] shrink-0">
      <select aria-label={label} disabled className="appearance-none block w-full h-[22px] bg-white text-[#7f7f7f] pl-[2px] opacity-100">
        <option>{value}</option>
      </select>
      <Chevron dir="down" className="absolute right-[3px] top-[5px] w-3 h-3 opacity-50 pointer-events-none" />
    </span>
  )
}

function StatusBar() {
  return (
    <footer className="h-[31px] bg-[#ccc] flex items-center text-black shrink-0">
      <p className="w-[1270px] shrink-0 pl-[2px] pt-[2px]">Wählen Sie Wände für die Erstellung von Linien aus.</p>
      <Icon className="w-5 h-5 mr-2">
        <path d="M0 10h6v9H0zM7 6h6v13H7zM14 10h5v9h-5z" fill="#999" stroke="#f2f2f2" strokeWidth=".8" />
        <circle cx="11" cy="3" r="3" fill="#999" stroke="#f2f2f2" strokeWidth=".6" />
        <circle cx="4" cy="7" r="3" fill="#999" stroke="#f2f2f2" strokeWidth=".6" />
        <circle cx="17" cy="7" r="2.6" fill="#999" stroke="#f2f2f2" strokeWidth=".6" />
      </Icon>
      <StatusSelect label="Aktive Bearbeitungsbereiche" value="" />
      <Icon className="w-5 h-5 ml-2">
        <path d="M5 1h13v6h-5l-2 3H8z" fill="#ccc" stroke="#999" strokeWidth="1.5" />
        <path d="M7 8h6v4l-3 3v4H1v-3l6-3z" fill="#999" />
      </Icon>
      <span className="w-10 pl-[6px] pt-1">:0</span>
      <span className="w-5 h-5 bg-[#999] rounded-[2px]" />
      <Icon className="w-5 h-5 ml-[10px] mr-2">
        <path d="M3 1h16v18H3z" fill="#a3a3a3" />
        <path d="M0 10h9V6l6 6-6 6v-4H0z" fill="#999" stroke="#eee" strokeWidth=".8" />
      </Icon>
      <StatusSelect label="Entwurfsoption" value="Basisvorlage" />
      <div className="ml-auto flex items-center gap-[10px]">
        {selectionTools.map((tool) => (
          <button key={tool.label} type="button" aria-label={tool.label}>
            <Icon>{tool.icon}</Icon>
          </button>
        ))}
      </div>
      <button type="button" className="ml-2 flex items-center text-[#555]">
        <Icon>
          <path d="M1 2h18l-7 8v9l-4-3v-6z" fill="#d3d8de" stroke="#4b515c" strokeWidth="1.5" />
        </Icon>
        :0
      </button>
      <span className="w-px h-[25px] bg-[#ddd] ml-[71px] mr-[3px]" />
    </footer>
  )
}

// Callout arrow pointing at the right end of the ribbon
function CalloutArrow() {
  return (
    <svg viewBox="0 0 257 360" className="absolute top-10 right-0 w-[257px] h-[360px] pointer-events-none drop-shadow-md" aria-hidden="true">
      <path d="M4 342L211 35 202 28 231 12 228 46 220 41 13 348a5.500 5.500 0 01-9-6z" fill="#fd4343" />
    </svg>
  )
}

export default function App() {
  return (
    <div className="relative h-screen flex flex-col overflow-hidden bg-[#ccc] font-['Open_Sans','Noto_Sans',sans-serif] text-[14px] leading-5">
      <header className="shrink-0">
        <div className="h-8 flex items-center">
          <QuickAccess />
          <h1 className="flex-1 text-center text-[#444] pb-[6px]">Autodesk Revit 2022 - Projekt1 - Grundriss: OG 1- OK RFB</h1>
          <WindowControls />
        </div>
        <Ribbon />
        <OptionsBar />
      </header>
      <div className="flex-1 min-h-0 flex pt-[2px]">
        <Properties />
        <ProjectBrowser />
        <ViewArea />
      </div>
      <StatusBar />
      <CalloutArrow />
    </div>
  )
}
